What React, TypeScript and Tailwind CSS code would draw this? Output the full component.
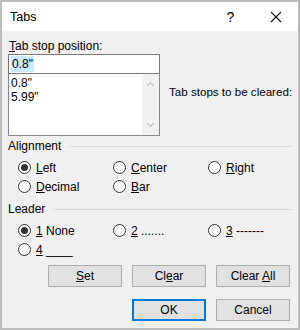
import React from 'react';

const font = { fontFamily: '"Liberation Sans", Arial, sans-serif' };

const Radio = ({ checked, children }: { checked?: boolean; children: React.ReactNode }) => (
    <div className="flex items-center gap-[5px] h-[19px]">
        <span className="w-[13px] h-[13px] rounded-full border border-[#333] bg-white flex items-center justify-center shrink-0">
            {checked && <span className="w-[7px] h-[7px] rounded-full bg-[#333]" />}
        </span>
        <span className="whitespace-nowrap">{children}</span>
    </div>
);

const Group = ({ title }: { title: string }) => (
    <div className="flex items-center gap-[8px] h-[16px]">
        <span>{title}</span>
        <span className="flex-1 h-px bg-[#dcdcdc]" />
    </div>
);

const Btn = ({ children, primary }: { children: React.ReactNode; primary?: boolean }) => (
    <button
        className={
            primary
                ? 'w-[74px] h-[22px] bg-[#e1e1e1] border-2 border-[#0078d7] flex items-center justify-center'
                : 'w-[74px] h-[22px] bg-[#e1e1e1] border border-[#adadad] flex items-center justify-center'
        }
    >
        <span className="whitespace-pre">{children}</span>
    </button>
);

export default function App() {
    return (
        <div
            className="w-[300px] h-[330px] border-2 border-[#bcbcbc] bg-[#f0f0f0] text-[12px] leading-[16px] text-black flex flex-col"
            style={font}
        >
            <div className="h-[29px] bg-white flex items-center pl-[8px] shrink-0">
                <span className="flex-1 text-[12.5px]">Tabs</span>
                <span className="w-[45px] text-center text-[14px]">?</span>
                <span className="w-[45px] flex items-center justify-center">
                    <svg width="12" height="12" viewBox="0 0 12 12">
                        <path d="M1 1 L11 11 M11 1 L1 11" stroke="#111" strokeWidth="1.1" />
                    </svg>
                </span>
            </div>

            <div className="flex flex-col px-[6px] pt-[7px]">
                <div className="pl-[1px] h-[16px]">
                    <u>T</u>ab stop position:
                </div>
                <div className="flex">
                    <div className="w-[152px] flex flex-col shrink-0">
                        <div className="h-[20px] bg-white border border-[#7a7a7a] flex items-center px-[2px]">
                            <span className="bg-[#cce8ff] px-px">0.8"</span>
                        </div>
                        <div className="h-[62px] bg-white border border-[#828790] border-t-0 flex">
                            <div className="flex-1 pl-[2px] pt-[2px] leading-[14px]">
                                <div>0.8"</div>
                                <div>5.99"</div>
                            </div>
                            <div className="w-[17px] bg-[#f0f0f0] flex flex-col items-center justify-between py-[7px]">
                                <svg width="9" height="6" viewBox="0 0 9 6">
                                    <path d="M1 5 L4.5 1.5 L8 5" stroke="#c2c2c2" fill="none" strokeWidth="1.2" />
                                </svg>
                                <svg width="9" height="6" viewBox="0 0 9 6">
                                    <path d="M1 1 L4.5 4.5 L8 1" stroke="#c2c2c2" fill="none" strokeWidth="1.2" />
                                </svg>
                            </div>
                        </div>
                    </div>
                    <div className="pl-[9px] pt-[30px] whitespace-nowrap text-[11.6px]">Tab stops to be cleared:</div>
                </div>

                <div className="mt-[2px]">
                    <Group title="Alignment" />
                </div>
                <div className="grid grid-cols-[95px_95px_1fr] pl-[10px] mt-[4px]">
                    <Radio checked>
                        <u>L</u>eft
                    </Radio>
                    <Radio>
                        <u>C</u>enter
                    </Radio>
                    <Radio>
                        <u>R</u>ight
                    </Radio>
                    <Radio>
                        <u>D</u>ecimal
                    </Radio>
                    <Radio>
                        <u>B</u>ar
                    </Radio>
                </div>

                <div className="mt-[5px]">
                    <Group title="Leader" />
                </div>
                <div className="grid grid-cols-[95px_95px_1fr] pl-[10px] mt-[4px]">
                    <Radio checked>
                        <u>1</u> None
                    </Radio>
                    <Radio>
                        <u>2</u> .......
                    </Radio>
                    <Radio>
                        <u>3</u> -------
                    </Radio>
                    <Radio>
                        <u>4</u> ____
                    </Radio>
                </div>

                <div className="flex justify-end gap-[10px] pr-[2px] mt-[6px]">
                    <Btn>
                        <u>S</u>et
                    </Btn>
                    <Btn>
                        Cl<u>e</u>ar
                    </Btn>
                    <Btn>
                        Clear <u>A</u>ll
                    </Btn>
                </div>
                <div className="flex justify-end gap-[10px] pr-[2px] mt-[12px]">
                    <Btn primary>OK</Btn>
                    <Btn>Cancel</Btn>
                </div>
            </div>
        </div>
    );
}
